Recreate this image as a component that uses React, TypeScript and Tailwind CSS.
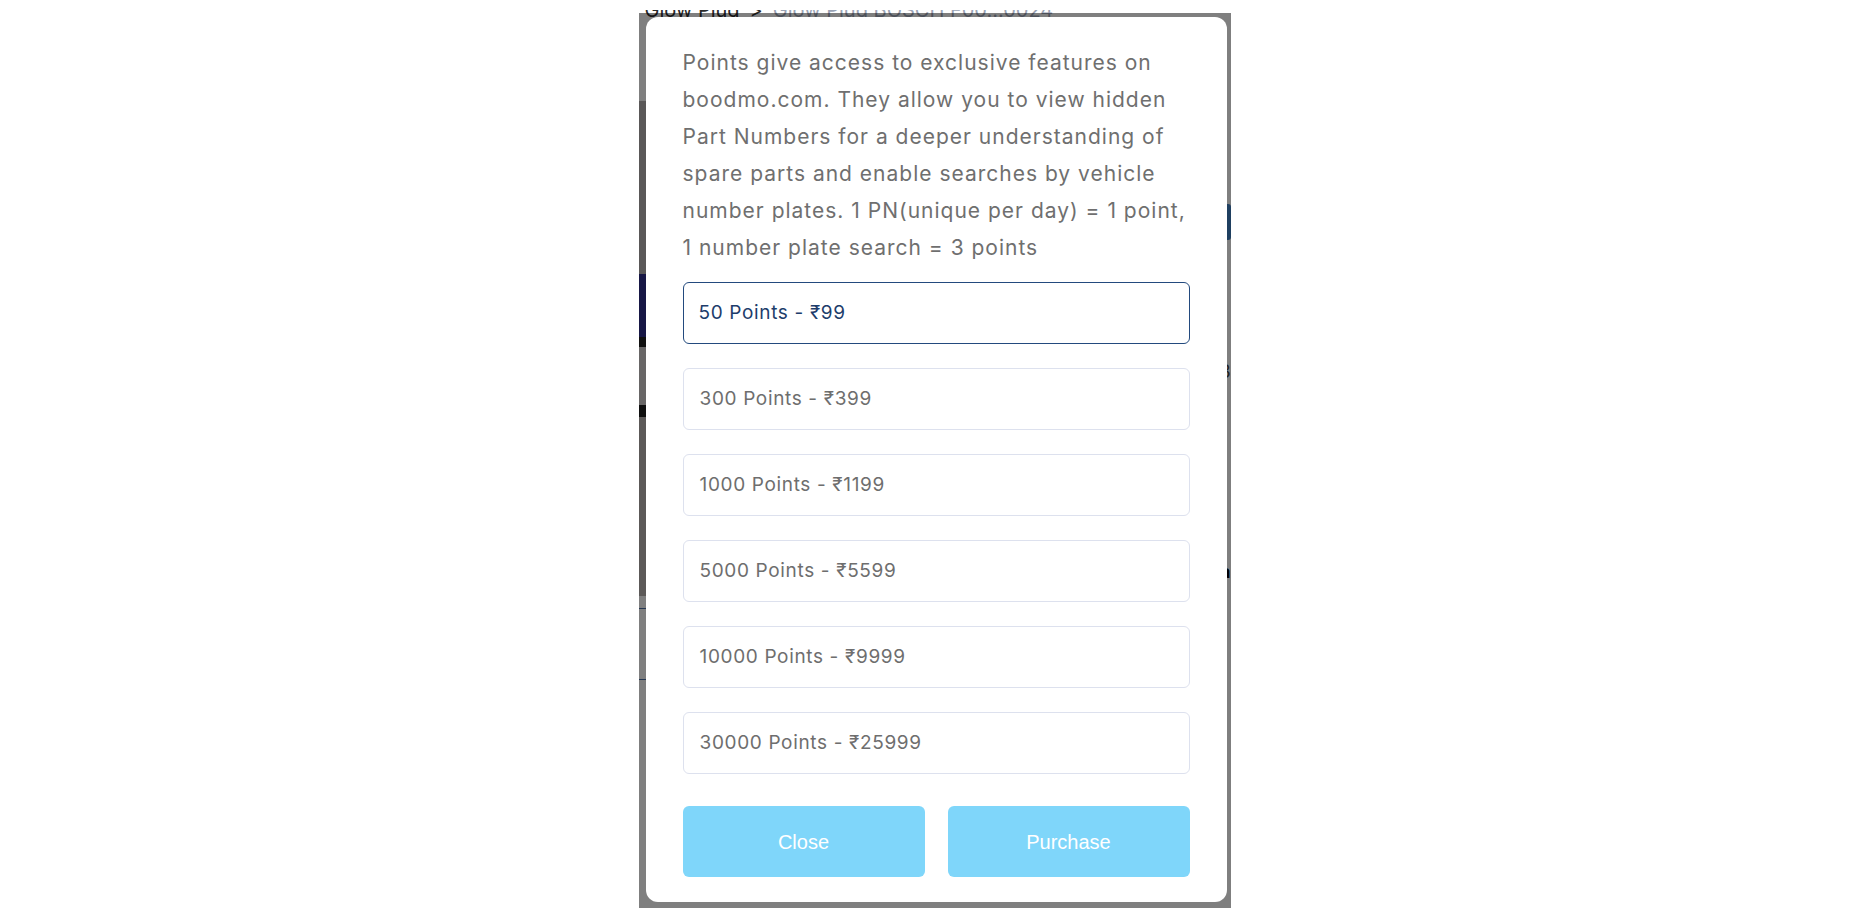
import React from "react";

const options = [
  { label: "50 Points - ₹99", selected: true },
  { label: "300 Points - ₹399" },
  { label: "1000 Points - ₹1199" },
  { label: "5000 Points - ₹5599" },
  { label: "10000 Points - ₹9999" },
  { label: "30000 Points - ₹25999" },
];

export default function App() {
  return (
    <div className="w-full h-[921px] bg-white flex justify-center overflow-hidden" style={{ fontFamily: "Inter, 'Noto Sans', sans-serif" }}>
      <div className="relative w-[592px] h-full overflow-hidden">
        {/* underlying page */}
        <div className="flex flex-col">
          <div className="mt-[10px] h-[20px] overflow-hidden">
            <div className="-mt-[12px] pl-[6px] text-[20px] leading-[24px] whitespace-nowrap flex gap-[10px]">
              <span className="text-[#2a2a2a]">Glow Plug</span>
              <span className="text-[#2a2a2a]">&gt;</span>
              <span className="text-[#9aa3b5]">Glow Plug BOSCH F00...0024</span>
            </div>
          </div>
          <div className="flex justify-between mt-[71px]">
            <div className="w-[300px] flex flex-col">
              <div className="h-[173px] bg-[#b4b0b0]" />
              <div className="h-[63px] bg-[#2e2e8a]" />
              <div className="h-[10px] bg-[#202020]" />
              <div className="h-[58px] bg-[#d0cccc]" />
              <div className="h-[12px] bg-[#1c1c1c]" />
              <div className="h-[179px] bg-[#b8b2b0]" />
              <div className="h-[12px]" />
              <div className="h-[1px] bg-[#4a6fa5]" />
              <div className="h-[70px]" />
              <div className="h-[1px] bg-[#4a6fa5]" />
            </div>
            <div className="w-[60px] flex flex-col items-end">
              <div className="h-[103px]" />
              <div className="w-[40px] h-[36px] bg-[#3f7fc0] rounded-[3px]" />
              <div className="h-[120px]" />
              <div className="text-[18px] text-[#444] leading-[24px]">3</div>
              <div className="h-[176px]" />
              <div className="text-[18px] text-black font-bold leading-[24px]">a</div>
            </div>
          </div>
        </div>

        {/* overlay */}
        <div className="absolute left-0 right-0 top-[13px] bottom-[13px] bg-black/50">
          <div className="ml-[7px] mt-[4px] w-[581px] h-[885px] bg-white rounded-[12px] px-[37px] pt-[27px] pb-[25px] flex flex-col">
            <p className="-mr-[6px] text-[21px] leading-[37px] tracking-[1px] text-[#6f6f6f]">
              Points give access to exclusive features on boodmo.com. They allow you to view hidden Part Numbers for a deeper understanding of spare parts and enable searches by vehicle number plates. 1 PN(unique per day) = 1 point, 1&nbsp;number plate search = 3 points
            </p>
            <div className="mt-[16px] flex flex-col gap-[24px]">
              {options.map((o) => (
                <div
                  key={o.label}
                  className={
                    o.selected
                      ? "h-[62px] rounded-[6px] border-[1.5px] border-[#234a7e] flex items-center pl-[15px] text-[19px] tracking-[0.65px] text-[#1d3d6b]"
                      : "h-[62px] rounded-[6px] border border-[#dde1ee] flex items-center pl-[16px] text-[19px] tracking-[0.65px] text-[#6e6e6e]"
                  }
                >
                  {o.label}
                </div>
              ))}
            </div>
            <div className="mt-[32px] grid grid-cols-2 gap-[23px]">
              <button className="h-[71px] rounded-[6px] bg-[#7fd6fa] text-white text-[20px]" style={{ fontFamily: "'Liberation Sans', Arial, sans-serif" }}>
                Close
              </button>
              <button className="h-[71px] rounded-[6px] bg-[#7fd6fa] text-white text-[20px]" style={{ fontFamily: "'Liberation Sans', Arial, sans-serif" }}>
                Purchase
              </button>
            </div>
          </div>
        </div>
      </div>
    </div>
  );
}
